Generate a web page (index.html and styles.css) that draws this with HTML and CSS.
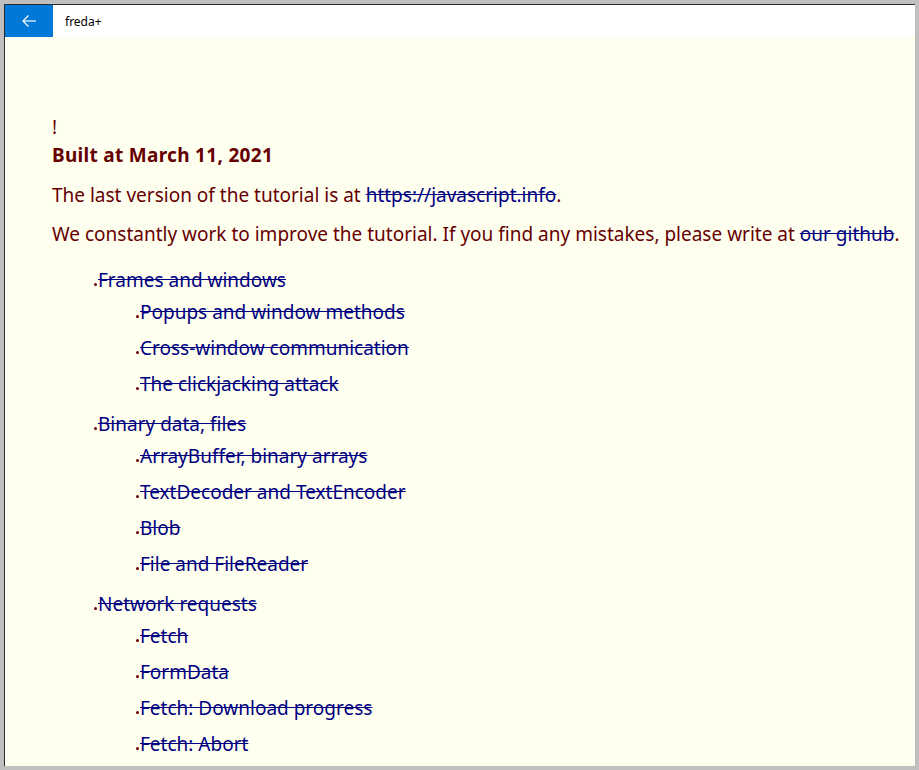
FILE: index.html
```
<!DOCTYPE html>
<html>
<head>
  <title>freda+</title>
  <link rel="stylesheet" href="styles.css">
</head>
<body>
  <div class="window">
    <div class="titlebar">
      <button class="back-button">
        <svg class="back-icon" xmlns="http://www.w3.org/2000/svg" width="14" height="12" viewBox="0 0 14 12" fill="none" stroke="currentColor" stroke-width="1.2">
          <polyline points="6.5 0.5 1 6 6.5 11.5"></polyline>
          <line x1="1" y1="6" x2="14" y2="6"></line>
        </svg>
      </button>
      <span class="window-title">freda+</span>
    </div>

    <div class="page">
      <p class="mark">!</p>
      <p class="built">Built at March 11, 2021</p>
      <p class="text">The last version of the tutorial is at <a href="#">https://javascript.info</a>.</p>
      <p class="text">We constantly work to improve the tutorial. If you find any mistakes, please write at <a href="#">our github</a>.</p>

      <ul class="toc">
        <li><a href="#">Frames and windows</a>
          <ul class="toc-sub">
            <li><a href="#">Popups and window methods</a></li>
            <li><a href="#">Cross-window communication</a></li>
            <li><a href="#">The clickjacking attack</a></li>
          </ul>
        </li>
        <li><a href="#">Binary data, files</a>
          <ul class="toc-sub">
            <li><a href="#">ArrayBuffer, binary arrays</a></li>
            <li><a href="#">TextDecoder and TextEncoder</a></li>
            <li><a href="#">Blob</a></li>
            <li><a href="#">File and FileReader</a></li>
          </ul>
        </li>
        <li><a href="#">Network requests</a>
          <ul class="toc-sub">
            <li><a href="#">Fetch</a></li>
            <li><a href="#">FormData</a></li>
            <li><a href="#">Fetch: Download progress</a></li>
            <li><a href="#">Fetch: Abort</a></li>
          </ul>
        </li>
      </ul>
    </div>
  </div>
</body>
</html>
```

FILE: styles.css
```
* {
  margin: 0;
  padding: 0;
  box-sizing: border-box;
}

body {
  background-color: #bfbfbf;
  padding: 4px;
  height: 770px;
  overflow: hidden;
  font-family: 'Noto Sans', sans-serif;
}

.window {
  width: 911px;
  height: 762px;
  border-top: 1px solid #2b2b2b;
  border-left: 1px solid #2b2b2b;
  display: flex;
  flex-direction: column;
  overflow: hidden;
}

/* Title bar */
.titlebar {
  height: 32px;
  background-color: #ffffff;
  display: flex;
  align-items: center;
  flex-shrink: 0;
}

.back-button {
  width: 48px;
  height: 32px;
  border: none;
  background-color: #0078d7;
  color: #ffffff;
  display: flex;
  align-items: center;
  justify-content: center;
}

.window-title {
  font-size: 12px;
  color: #000000;
  padding-left: 12px;
}

/* Page */
.page {
  flex: 1;
  background-color: #fffff0;
  padding: 78px 0 0 47px;
  color: #660000;
  font-size: 19px;
  line-height: 24px;
}

.page a {
  color: #000080;
  text-decoration: line-through;
}

.mark {
  margin-bottom: 4px;
}

.built {
  font-weight: bold;
  letter-spacing: 0.3px;
  margin-bottom: 16px;
}

.text {
  margin-bottom: 15px;
}

.toc {
  list-style: none;
  padding-left: 42px;
  margin-top: 22px;
}

.toc > li {
  margin-bottom: 16px;
}

.toc-sub {
  list-style: none;
  padding-left: 42px;
  margin-top: 8px;
}

.toc-sub li {
  margin-bottom: 12px;
}

.toc li::before {
  content: "";
  display: inline-block;
  width: 3px;
  height: 3px;
  border-radius: 50%;
  background-color: #660000;
  margin-right: 1px;
  vertical-align: 1px;
}
```
